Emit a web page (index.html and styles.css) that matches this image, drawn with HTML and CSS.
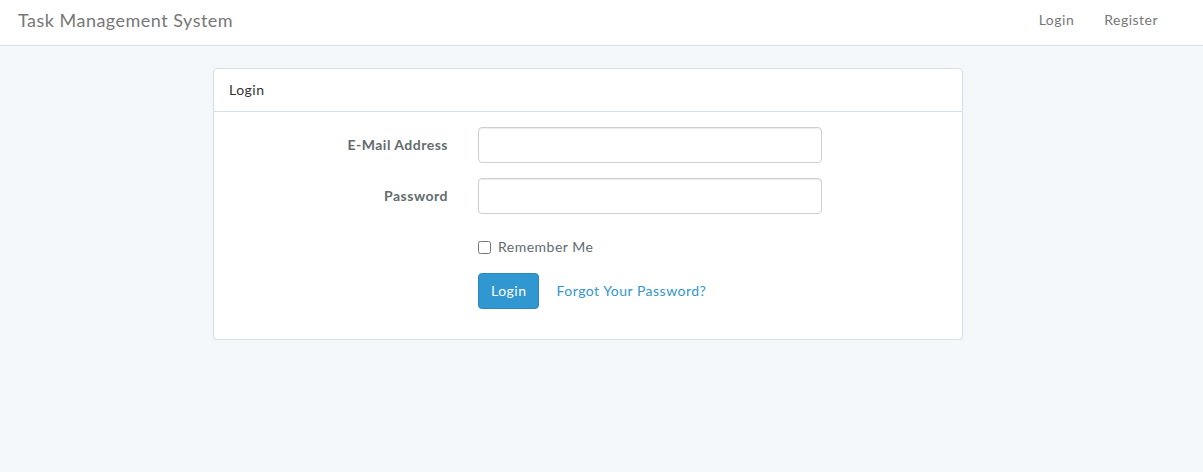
FILE: index.html
```html
<!DOCTYPE html>
<html lang="en">
<head>
<meta charset="utf-8">
<title>Task Management System</title>
<link rel="stylesheet" href="styles.css">
</head>
<body>
<nav class="navbar">
  <a class="brand" href="#">Task Management System</a>
  <ul class="nav-links">
    <li><a href="#">Login</a></li>
    <li><a href="#">Register</a></li>
  </ul>
</nav>
<main class="page">
  <section class="panel">
    <div class="panel-heading">Login</div>
    <div class="panel-body">
      <form class="form">
        <div class="form-group">
          <label class="control-label" for="email">E-Mail Address</label>
          <div class="field"><input id="email" type="email" class="form-control"></div>
        </div>
        <div class="form-group">
          <label class="control-label" for="password">Password</label>
          <div class="field"><input id="password" type="password" class="form-control"></div>
        </div>
        <div class="form-group">
          <div class="control-label"></div>
          <div class="field checkbox"><label><input type="checkbox"> Remember Me</label></div>
        </div>
        <div class="form-group">
          <div class="control-label"></div>
          <div class="field actions"><button type="button" class="btn">Login</button><a class="btn-link" href="#">Forgot Your Password?</a></div>
        </div>
      </form>
    </div>
  </section>
</main>
</body>
</html>
```
FILE: styles.css
```css
* { box-sizing: border-box; }
html, body { margin: 0; padding: 0; }
body {
  background: #f5f8fa;
  font-family: "Lato", "Liberation Sans", sans-serif;
  font-size: 14px;
  line-height: 1.6;
  letter-spacing: 0.035em;
  color: #636b6f;
}
a { text-decoration: none; }
.navbar {
  height: 46px;
  background: #fff;
  border-bottom: 1px solid #d3e0e9;
  display: flex;
  align-items: center;
  justify-content: space-between;
  padding: 0 30px 0 18px;
}
.brand {
  color: #777;
  font-size: 18px;
  line-height: 20px;
  margin-top: -6px;
}
.nav-links {
  list-style: none;
  margin: -6px 0 0 0;
  padding: 0;
  display: flex;
}
.nav-links a {
  display: block;
  color: #777;
  padding: 0 15px;
  line-height: 20px;
}
.page { padding: 22px 0 0 213px; }
.panel {
  width: 750px;
  background: #fff;
  border: 1px solid #d3e0e9;
  border-radius: 4px;
  box-shadow: 0 1px 1px rgba(0,0,0,.05);
}
.panel-heading {
  padding: 10px 15px;
  border-bottom: 1px solid #d3e0e9;
  color: #333;
  line-height: 22px;
}
.panel-body { padding: 15px; }
.form-group {
  display: flex;
  margin-bottom: 15px;
}
.control-label {
  width: 219px;
  text-align: right;
  font-weight: 700;
  padding-top: 7px;
  line-height: 22px;
  flex: none;
}
.field {
  margin-left: 30px;
  width: 344px;
}
.form-control {
  display: block;
  width: 100%;
  height: 36px;
  border: 1px solid #ccd0d2;
  border-radius: 4px;
  box-shadow: inset 0 1px 1px rgba(0,0,0,.075);
  padding: 6px 12px;
  font: inherit;
}
.checkbox { padding-top: 7px; min-height: 29px; }
.checkbox label {
  display: flex;
  align-items: center;
  line-height: 22px;
}
.checkbox input {
  margin: 0 7px 0 0;
  width: 13px;
  height: 13px;
}
.actions { display: flex; align-items: center; }
.btn {
  font: inherit;
  letter-spacing: inherit;
  color: #fff;
  background: #3097d1;
  border: 1px solid #2a88bd;
  border-radius: 4px;
  padding: 6px 12px;
  height: 36px;
  line-height: 22px;
}
.btn-link {
  color: #3097d1;
  margin-left: 17px;
}
```
